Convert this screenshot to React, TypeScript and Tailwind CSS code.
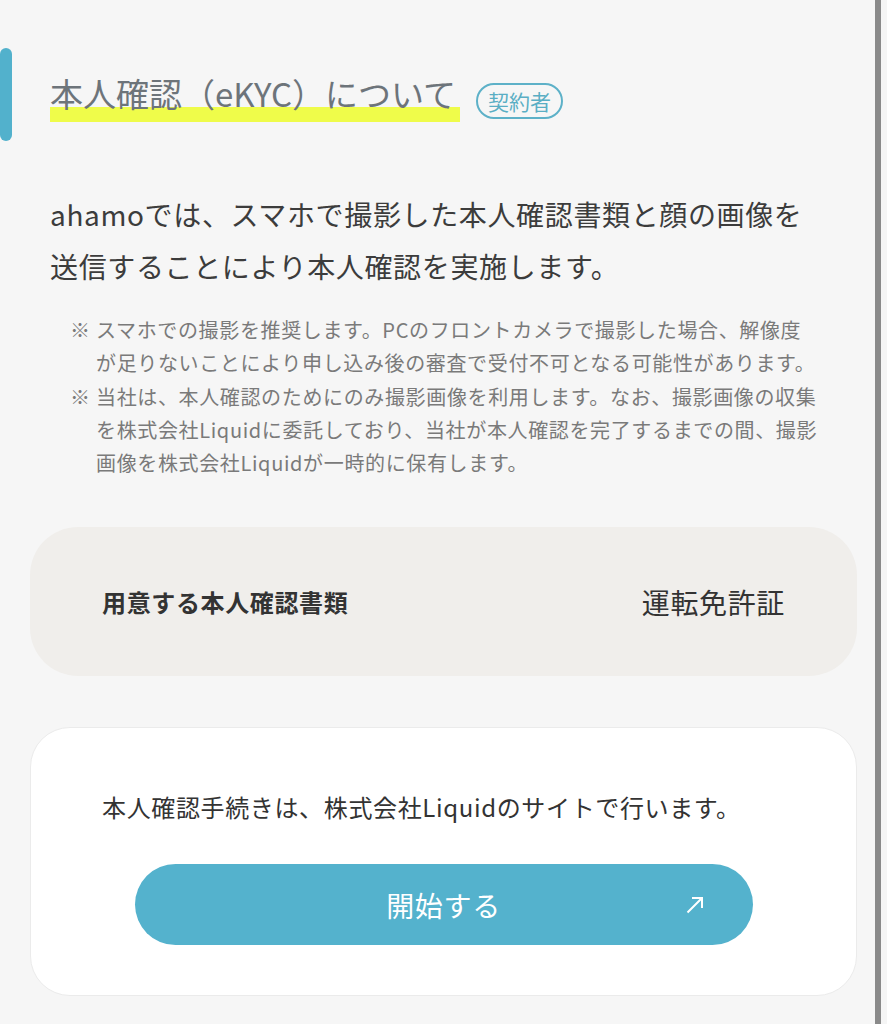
export default function App() {
  const notes = [
    ["スマホでの撮影を推奨します。PCのフロントカメラで撮影した場合、解像度", "が足りないことにより申し込み後の審査で受付不可となる可能性があります。"],
    [
      "当社は、本人確認のためにのみ撮影画像を利用します。なお、撮影画像の収集",
      "を株式会社Liquidに委託しており、当社が本人確認を完了するまでの間、撮影",
      "画像を株式会社Liquidが一時的に保有します。",
    ],
  ];

  return (
    <div className="flex h-[1024px] w-[887px] overflow-hidden bg-[#f6f6f6] font-['Noto_Sans_CJK_JP',sans-serif] tracking-[0.04em]">
      <main className="w-[875px] shrink-0 pt-[48px]">
        {/* section heading */}
        <div className="flex h-[93px] items-start gap-[38px]">
          <div className="h-full w-3 rounded-full bg-[#52b1cc]" />
          <div className="flex items-start pt-[29px]">
            <h2 className="inline-block bg-[linear-gradient(transparent_66%,#effc4a_66%)] pb-[12px] pr-[4px] text-[33px] leading-[33px] font-normal tracking-normal text-[#6d747a]">
              本人確認（eKYC）について
            </h2>
            <span className="ml-[16px] mt-[6px] flex h-[36px] items-center rounded-full border-2 border-[#5db1c8] px-[10px] text-[21px] leading-none tracking-normal text-[#5aaec4]">
              契約者
            </span>
          </div>
        </div>

        <p className="mt-[47px] pl-[50px] pr-[20px] text-[28px] leading-[52px] text-[#3c3c3c]">
          ahamoでは、スマホで撮影した本人確認書類と顔の画像を
          <br />
          送信することにより本人確認を実施します。
        </p>

        <ul className="mt-[21px] pl-[70px] pr-[20px] text-[20px] leading-[33.3px] text-[#7a7a7a]">
          {notes.map((lines, i) => (
            <li key={i} className="flex">
              <span className="w-[26px] shrink-0 tracking-normal">※</span>
              <span>
                {lines.map((l, j) => (
                  <span key={j} className="block whitespace-nowrap">
                    {l}
                  </span>
                ))}
              </span>
            </li>
          ))}
        </ul>

        <div className="ml-[30px] mt-[48px] flex h-[149px] w-[827px] items-center justify-between rounded-[48px] bg-[#f0eeeb] px-[72px]">
          <span className="text-[24px] font-bold text-[#333333]">用意する本人確認書類</span>
          <span className="text-[28px] text-[#333333]">運転免許証</span>
        </div>

        <div className="ml-[30px] mt-[51px] flex w-[827px] flex-col items-center rounded-[40px] border border-[#ebebeb] bg-white pb-[50px] pt-[61px]">
          <p className="w-full pl-[71px] text-[24px] leading-[36px] text-[#333333]">
            本人確認手続きは、株式会社Liquidのサイトで行います。
          </p>
          <button className="relative mt-[39px] flex h-[81px] w-[618px] items-center justify-center rounded-full bg-[#54b2cd] text-[28px] text-white">
            開始する
            <svg
              className="absolute right-[49px] top-1/2 -translate-y-1/2"
              width="18"
              height="18"
              viewBox="0 0 18 18"
              fill="none"
              stroke="white"
              strokeWidth="2"
            >
              <path d="M1.5 16.5 L16 2 M6 2 H16 V12" />
            </svg>
          </button>
        </div>
      </main>
      <div className="w-[6px] shrink-0 bg-[#8a8a8a]" />
      <div className="flex-1 bg-[#f5f5f5]" />
    </div>
  );
}
